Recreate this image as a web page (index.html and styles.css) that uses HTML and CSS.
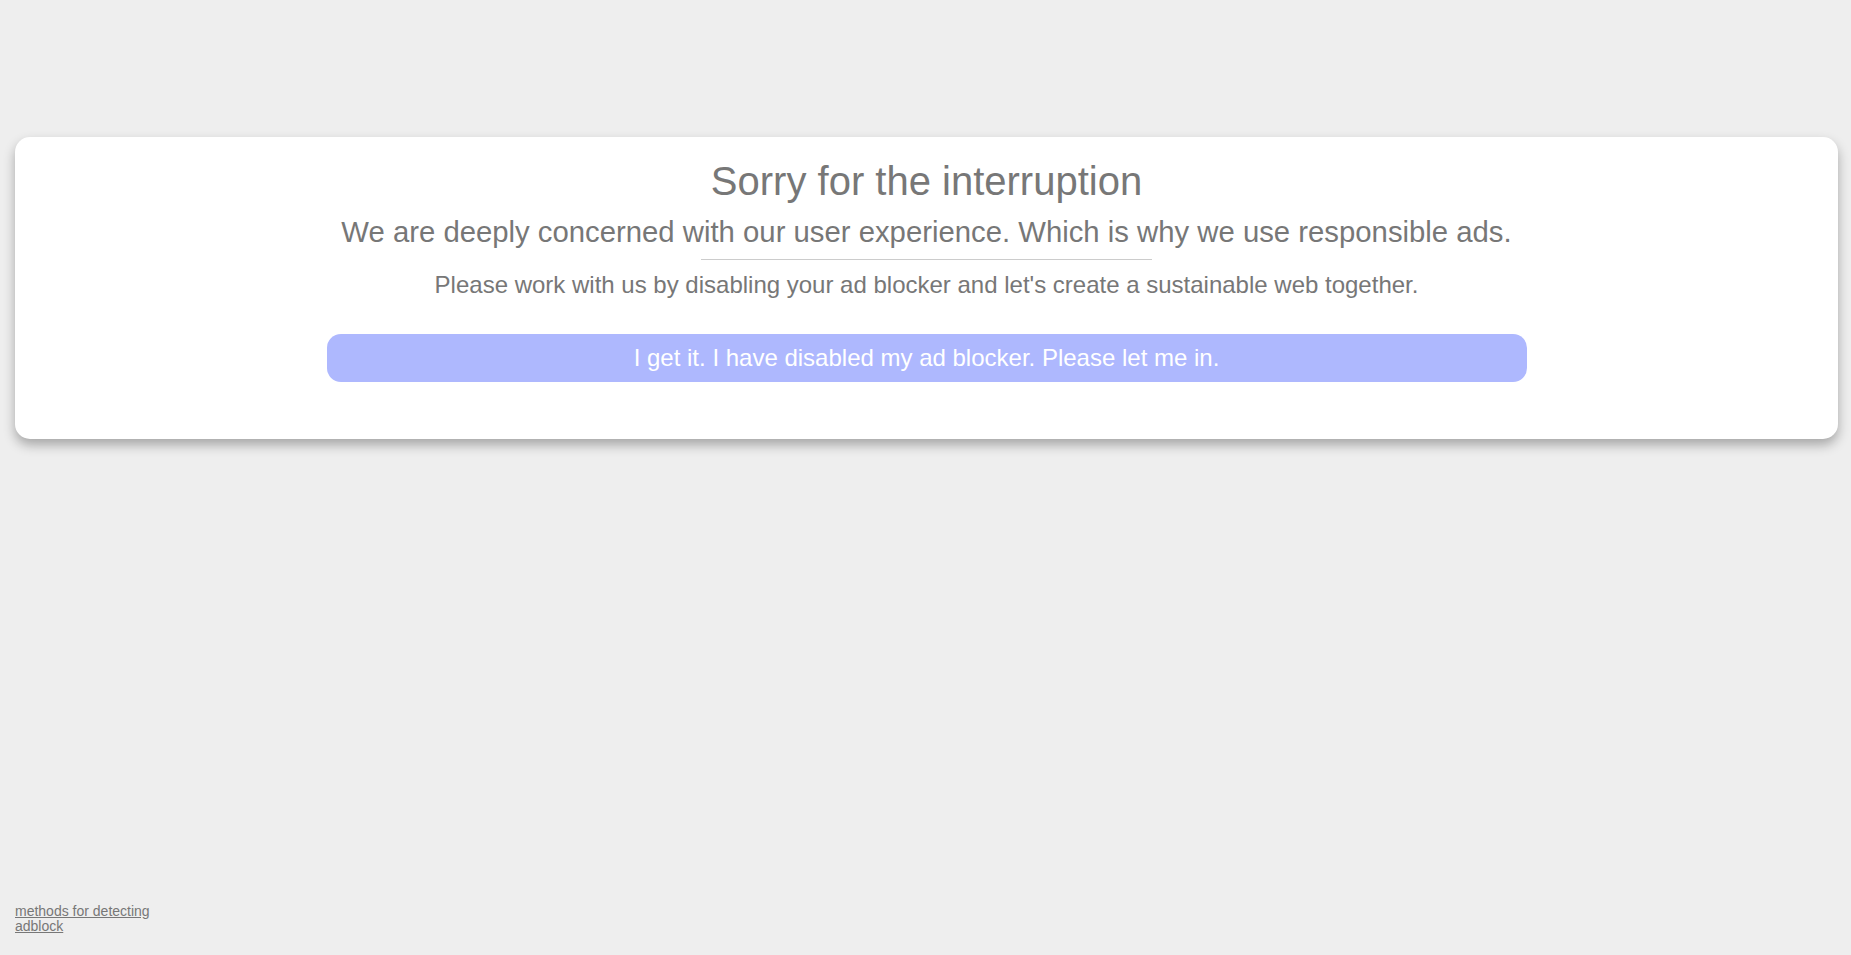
FILE: index.html
```html
<!DOCTYPE html>
<html lang="en">
<head>
    <meta charset="UTF-8">
    <meta name="viewport" content="width=device-width, initial-scale=1.0">
    <title>Sorry for the interruption</title>
    <link rel="stylesheet" href="styles.css">
</head>
<body>

<div class="notice-box">
    <h1 class="notice-title">Sorry for the interruption</h1>
    <h2 class="notice-sub">We are deeply concerned with our user experience. Which is why we use responsible ads.</h2>
    <hr class="notice-line">
    <p class="notice-text">Please work with us by disabling your ad blocker and let's create a sustainable web together.</p>
    <button type="button" class="notice-btn">I get it. I have disabled my ad blocker. Please let me in.</button>
</div>

<div class="footer-link">
    <a href="#">methods for detecting adblock</a>
</div>

</body>
</html>
```

FILE: styles.css
```css
/* Halaman */
html, body {
    height: 100%;
}

body {
    margin: 0;
    background-color: #eeeeee;
    font-family: "Liberation Sans", Arial, sans-serif;
    display: flex;
    flex-direction: column;
}

/* Kotak pesan */
.notice-box {
    margin: 137px 13px 0 15px;
    padding: 21px 20px 57px;
    background-color: #ffffff;
    border-radius: 15px;
    box-shadow: 0 6px 12px rgba(0, 0, 0, 0.3);
    text-align: center;
    color: #777777;
}

.notice-title {
    margin: 0;
    font-size: 40px;
    font-weight: normal;
    line-height: 46px;
}

.notice-sub {
    margin: 11px 0 0;
    font-size: 29.3px;
    font-weight: normal;
    line-height: 33px;
}

.notice-line {
    width: 451px;
    margin: 11px auto 0;
    border: none;
    border-top: 1px solid #cccccc;
}

.notice-text {
    margin: 11px 0 0;
    font-size: 24px;
    line-height: 27px;
}

.notice-btn {
    display: block;
    width: 1200px;
    height: 48px;
    margin: 36px auto 0;
    padding: 0;
    border: none;
    border-radius: 14px;
    background-color: #aeb8fe;
    color: #ffffff;
    font-family: inherit;
    font-size: 24px;
    cursor: pointer;
}

/* Tautan bawah */
.footer-link {
    margin-top: auto;
    padding: 0 0 21px 15px;
    width: 150px;
    font-size: 14px;
    line-height: 15px;
}

.footer-link a {
    color: #777777;
}
```
